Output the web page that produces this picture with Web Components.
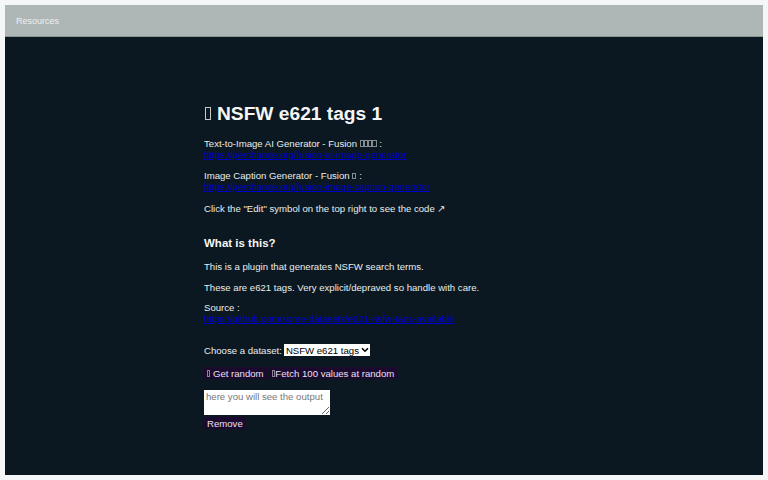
<!DOCTYPE html>
<html>
<head>
<meta charset="utf-8">
<title>NSFW e621 tags 1</title>
<style>
  html, body { margin: 0; padding: 0; height: 100%; background: #f5f6f8; }
  body { font-family: "Liberation Sans", Arial, sans-serif; }
</style>
</head>
<body>
<plugin-frame>
  <top-bar slot="bar">Resources</top-bar>
  <h-title><no-glyph></no-glyph> NSFW e621 tags 1</h-title>
  <link-block href="https://perchance.org/fusion-ai-image-generator">Text-to-Image AI Generator - Fusion <no-glyph></no-glyph><no-glyph></no-glyph><no-glyph></no-glyph><no-glyph></no-glyph> :</link-block>
  <link-block href="https://perchance.org/fusion-image-caption-generator">Image Caption Generator - Fusion <no-glyph></no-glyph> :</link-block>
  <plain-text>Click the "Edit" symbol on the top right to see the code ↗</plain-text>
  <sub-title>What is this?</sub-title>
  <plain-text>This is a plugin that generates NSFW search terms.</plain-text>
  <plain-text>These are e621 tags. Very explicit/depraved so handle with care.</plain-text>
  <link-block href="https://github.com/some-datasets/e621-nsfw-tags-available">Source :</link-block>
  <generator-form></generator-form>
</plugin-frame>

<script>
// emoji that has no font in the screenshot: shows as an empty box
class NoGlyph extends HTMLElement {
  constructor() {
    super();
    this.attachShadow({ mode: "open" }).innerHTML = `
      <style>
        :host { display: inline-block; box-sizing: border-box; width: var(--glyph-width, 0.44em); height: 0.68em; margin: 0 var(--glyph-gap, 0); border: 1px solid currentColor; opacity: var(--glyph-opacity, 0.55); vertical-align: -0.02em; }
      </style>
    `;
  }
}

class PluginFrame extends HTMLElement {
  constructor() {
    super();
    this.attachShadow({ mode: "open" }).innerHTML = `
      <style>
        :host { display: flex; flex-direction: column; box-sizing: border-box; height: 480px; padding: 5px; }
        .inner { flex: 1; display: flex; flex-direction: column; background: #0b1821; }
        .content { width: 360px; margin-left: 199px; padding-top: 65px; color: #e9eded; font-size: 9.6px; }
      </style>
      <div class="inner">
        <slot name="bar"></slot>
        <div class="content"><slot></slot></div>
      </div>
    `;
  }
}

class TopBar extends HTMLElement {
  constructor() {
    super();
    this.attachShadow({ mode: "open" }).innerHTML = `
      <style>
        :host { display: flex; align-items: center; box-sizing: border-box; height: 32px; padding: 0 11px; background: #aeb6b6; border-bottom: 1px solid #89928f; color: #eef0f0; font-size: 9px; }
      </style>
      <slot></slot>
    `;
  }
}

class HTitle extends HTMLElement {
  constructor() {
    super();
    this.attachShadow({ mode: "open" }).innerHTML = `
      <style>
        :host { display: block; font-size: 19.2px; font-weight: bold; line-height: 23px; margin-bottom: 12.5px; color: #f4f6f6; --glyph-width: 0.34em; --glyph-gap: 0.03em; --glyph-opacity: 0.8; }
      </style>
      <slot></slot>
    `;
  }
}

class SubTitle extends HTMLElement {
  constructor() {
    super();
    this.attachShadow({ mode: "open" }).innerHTML = `
      <style>
        :host { display: block; font-size: 11.5px; font-weight: bold; line-height: 13px; margin: 23.4px 0 10.5px; color: #f4f6f6; }
      </style>
      <slot></slot>
    `;
  }
}

class PlainText extends HTMLElement {
  constructor() {
    super();
    this.attachShadow({ mode: "open" }).innerHTML = `
      <style>
        :host { display: block; line-height: 11.5px; margin-bottom: 9.2px; }
      </style>
      <slot></slot>
    `;
  }
}

class LinkBlock extends HTMLElement {
  constructor() {
    super();
    this.attachShadow({ mode: "open" }).innerHTML = `
      <style>
        :host { display: block; line-height: 11px; margin-bottom: 10.5px; }
        a { color: #0000cc; display: block; white-space: nowrap; }
      </style>
      <div><slot></slot></div>
      <a></a>
    `;
  }

  connectedCallback() {
    const link = this.shadowRoot.querySelector("a");
    link.href = this.getAttribute("href");
    link.textContent = this.getAttribute("href");
  }
}

class GeneratorForm extends HTMLElement {
  constructor() {
    super();
    this.attachShadow({ mode: "open" }).innerHTML = `
      <style>
        :host { display: block; margin-top: 19.5px; font-size: 9.6px; }
        .row { display: flex; align-items: center; }
        .dataset { margin-bottom: 11px; gap: 2px; }
        select {
          appearance: none; box-sizing: border-box; width: 86px; height: 12.5px; padding: 0 10px 0 2px; border: 0;
          font: 9.6px "Liberation Sans", Arial, sans-serif; color: #000;
          background: #fff url("data:image/svg+xml,%3Csvg xmlns='http://www.w3.org/2000/svg' width='8' height='6'%3E%3Cpath d='M1 1.2l3 3 3-3' fill='none' stroke='%23000' stroke-width='1.6'/%3E%3C/svg%3E") no-repeat right 1px center;
        }
        .buttons { gap: 2.5px; margin-bottom: 11px; }
        button { font: 9.6px "Liberation Sans", Arial, sans-serif; color: #e9e0f0; background: #1b0a2e; border: 0; padding: 0 3px; height: 12px; --glyph-width: 0.34em; }
        textarea { display: block; box-sizing: border-box; width: 126px; height: 25px; margin: 0 0 2px; padding: 1px 2px; border: 0; font: 9.6px "Liberation Sans", Arial, sans-serif; }
        textarea::placeholder { color: #777; }
      </style>
      <div class="row dataset">
        <span>Choose a dataset:</span>
        <select><option>NSFW e621 tags</option></select>
      </div>
      <div class="row buttons">
        <button><no-glyph></no-glyph> Get random</button>
        <button><no-glyph></no-glyph>Fetch 100 values at random</button>
      </div>
      <textarea placeholder="here you will see the output"></textarea>
      <button>Remove</button>
    `;
  }
}

customElements.define("no-glyph", NoGlyph);
customElements.define("plugin-frame", PluginFrame);
customElements.define("top-bar", TopBar);
customElements.define("h-title", HTitle);
customElements.define("sub-title", SubTitle);
customElements.define("plain-text", PlainText);
customElements.define("link-block", LinkBlock);
customElements.define("generator-form", GeneratorForm);
</script>
</body>
</html>
